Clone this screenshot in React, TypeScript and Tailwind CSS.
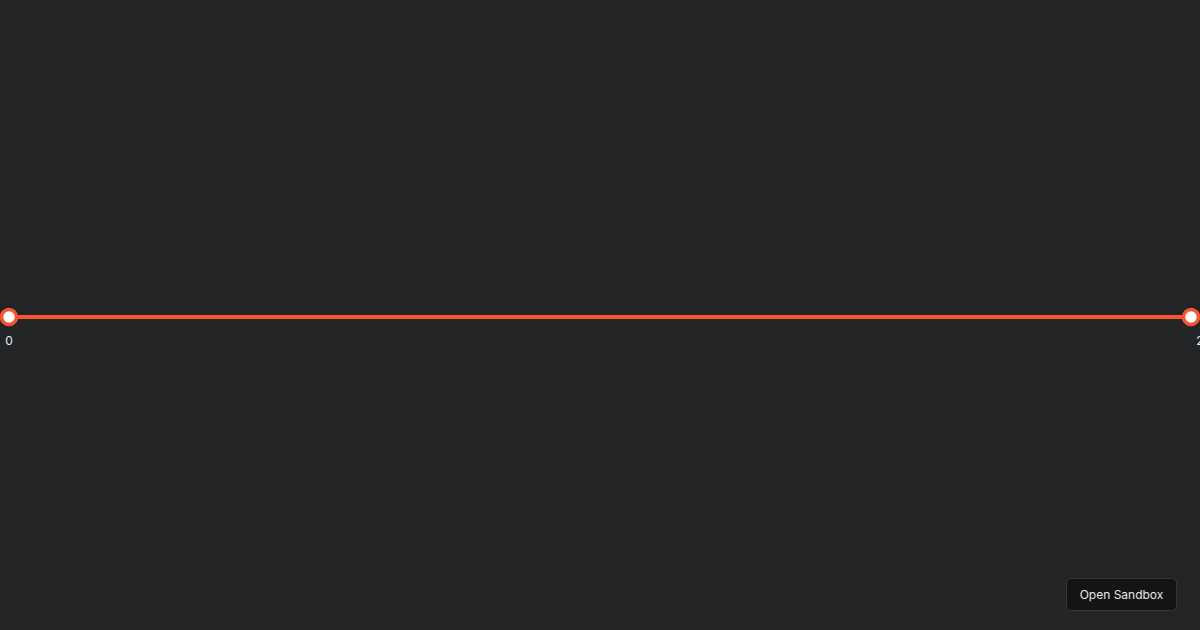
const ACCENT = "#f5562f";

const Axis = () => (
  <svg width={1200} height={630} className="block font-['Inter','Liberation_Sans',sans-serif]">
    <line x1={9} y1={317} x2={1191} y2={317} stroke={ACCENT} strokeWidth={4} />
    <circle cx={9} cy={317} r={7.5} fill="#ffffff" stroke={ACCENT} strokeWidth={3.5} />
    <circle cx={1191} cy={317} r={7.5} fill="#ffffff" stroke={ACCENT} strokeWidth={3.5} />
    <text x={9} y={345} textAnchor="middle" fontSize={12} fill="#e6ebf2">0</text>
    <text x={1200} y={345} textAnchor="middle" fontSize={12} fill="#e6ebf2">2</text>
  </svg>
);

export default function App() {
  return (
    <div className="relative w-[1200px] h-[630px] overflow-hidden bg-[#232425] font-['Inter','Liberation_Sans',sans-serif]">
      <Axis />
      <button className="absolute right-[23px] bottom-[19px] h-[33px] w-[111px] rounded-[5px] border border-[#3a3633] bg-[#141414] text-[12px] text-[#e8e8e8]">
        Open Sandbox
      </button>
    </div>
  );
}
